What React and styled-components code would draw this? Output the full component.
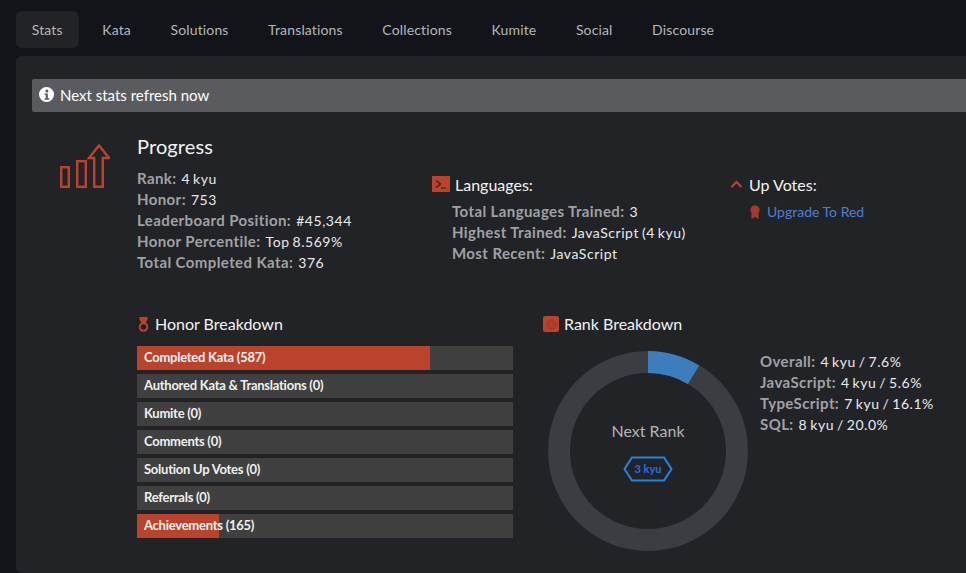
import React from 'react'
import styled, { createGlobalStyle } from 'styled-components'

const GlobalStyle = createGlobalStyle`
  html, body {
    margin: 0;
    padding: 0;
    height: 100%;
    background: #131419;
    overflow: hidden;
  }
  body {
    font-family: Lato, "Liberation Sans", sans-serif;
    color: #fff;
  }
`

const tabs = ['Stats', 'Kata', 'Solutions', 'Translations', 'Collections', 'Kumite', 'Social', 'Discourse']
const progress = [
  ['Rank', '4 kyu'],
  ['Honor', '753'],
  ['Leaderboard Position', '#45,344'],
  ['Honor Percentile', 'Top 8.569%'],
  ['Total Completed Kata', '376'],
]
const languages = [
  ['Total Languages Trained', '3'],
  ['Highest Trained', 'JavaScript (4 kyu)'],
  ['Most Recent', 'JavaScript'],
]
const honor = [
  ['Completed Kata (587)', 78],
  ['Authored Kata & Translations (0)', 0],
  ['Kumite (0)', 0],
  ['Comments (0)', 0],
  ['Solution Up Votes (0)', 0],
  ['Referrals (0)', 0],
  ['Achievements (165)', 21.8],
]
const ranks = [
  ['Overall', '4 kyu / 7.6%'],
  ['JavaScript', '4 kyu / 5.6%'],
  ['TypeScript', '7 kyu / 16.1%'],
  ['SQL', '8 kyu / 20.0%'],
]

const Stat = ({ label, value }) => (
  <StatRow>
    <StatLabel>{label}:</StatLabel>
    <StatValue>{value}</StatValue>
  </StatRow>
)

const App = () => {
  return (
    <Page>
      <GlobalStyle />
      <Tabs>
        {tabs.map((t, i) => <Tab key={t} $active={i === 0}>{t}</Tab>)}
      </Tabs>
      <Panel>
        <Alert>
          <svg width="15" height="15" viewBox="0 0 16 16">
            <circle cx="8" cy="8" r="8" fill="#fff" />
            <circle cx="8.4" cy="4.2" r="1.6" fill="#5a5b5f" />
            <path d="M6 7h3.4v5H11v1.5H6V12h1.2V8.5H6z" fill="#5a5b5f" />
          </svg>
          Next stats refresh now
        </Alert>
        <Overview>
          <ProgressIcon viewBox="0 0 52 46">
            <g fill="none" stroke="#bb432c" strokeWidth="2.4">
              <rect x="3.200" y="24.200" width="7.600" height="19.600" />
              <rect x="19.200" y="18.200" width="8.600" height="25.600" />
              <path d="M36.200 43.800V15H31L41 2.500 51 15H44.800V43.800z" />
            </g>
          </ProgressIcon>
          <ProgressColumn>
            <Heading>Progress</Heading>
            {progress.map(([l, v]) => <Stat key={l} label={l} value={v} />)}
          </ProgressColumn>
          <SideColumn>
            <SubHeading>
              <IconBox $width={18}>
                <svg width="16" height="16" viewBox="0 0 16 16" fill="none" stroke="#2a2326" strokeWidth="1.2">
                  <path d="M3 4.5 7.5 8 3 11.5M8 12h5" />
                </svg>
              </IconBox>
              Languages:
            </SubHeading>
            <Indented>
              {languages.map(([l, v]) => <Stat key={l} label={l} value={v} />)}
            </Indented>
          </SideColumn>
          <SideColumn>
            <SubHeading>
              <svg width="14" height="8" viewBox="0 0 14 8" fill="none" stroke="#bb432c" strokeWidth="2.2">
                <path d="M1.5 7 6.5 2l5 5" />
              </svg>
              <span>Up Votes:</span>
            </SubHeading>
            <Upgrade>
              <svg width="10" height="14" viewBox="0 0 10 14" fill="#a8392a">
                <circle cx="5" cy="5" r="4.6" />
                <path d="M1.5 8v6L5 12l3.5 2V8z" />
              </svg>
              <UpgradeLink href="#">Upgrade To Red</UpgradeLink>
            </Upgrade>
          </SideColumn>
        </Overview>
        <Breakdown>
          <HonorColumn>
            <BreakdownHeading>
              <MedalIcon width="13" height="15" viewBox="0 0 13 15">
                <path d="M2.500 0h8v2.500L8.500 6h-4L2.500 2.500z" fill="#bb432c" />
                <circle cx="6.500" cy="10" r="3.800" fill="none" stroke="#bb432c" strokeWidth="2" />
              </MedalIcon>
              Honor Breakdown
            </BreakdownHeading>
            <Bars>
              {honor.map(([label, pct]) => (
                <Bar key={label}>
                  <BarFill style={{ width: `${pct}%` }} />
                  <BarLabel>{label}</BarLabel>
                </Bar>
              ))}
            </Bars>
          </HonorColumn>
          <RankColumn>
            <BreakdownHeading>
              <IconBox $width={16} $round>
                <svg width="15" height="15" viewBox="0 0 16 16" fill="none" stroke="#8f3324" strokeWidth="1">
                  <circle cx="8" cy="8" r="5" />
                  <circle cx="8" cy="8" r="2.500" />
                </svg>
              </IconBox>
              Rank Breakdown
            </BreakdownHeading>
            <RankBody>
              <Donut>
                <svg width="200" height="200" viewBox="0 0 200 200">
                  <circle cx="100" cy="100" r="89" fill="none" stroke="#3c3d42" strokeWidth="22" />
                  <path d="M100 0A100 100 0 0 1 151.300 14.600L139.800 33A78 78 0 0 0 100 22z" fill="#3c7ebb" />
                </svg>
                <DonutCenter>
                  <NextRank>Next Rank</NextRank>
                  <Badge>
                    <svg width="50" height="26" viewBox="0 0 50 26">
                      <path d="M9 1.500h32L48.500 13 41 24.500H9L1.500 13z" fill="none" stroke="#1f87e0" strokeWidth="2" />
                    </svg>
                    <BadgeText>3 kyu</BadgeText>
                  </Badge>
                </DonutCenter>
              </Donut>
              <RankList>
                {ranks.map(([l, v]) => <Stat key={l} label={l} value={v} />)}
              </RankList>
            </RankBody>
          </RankColumn>
        </Breakdown>
      </Panel>
    </Page>
  )
}

const Page = styled.div`
  width: 1010px;
  height: 573px;
  padding: 11px 0 0 16px;
  box-sizing: border-box;
  overflow: hidden;
`

const Tabs = styled.nav`
  display: flex;
  height: 37px;
  margin-bottom: 8px;
`

const Tab = styled.div`
  display: flex;
  align-items: center;
  padding: 0 15.750px;
  margin-right: 8px;
  font-size: 14px;
  letter-spacing: 0.15px;
  color: #b4b7ba;
  border-radius: 6px;
  background: ${p => (p.$active ? '#222327' : 'transparent')};
`

const Panel = styled.main`
  height: 517px;
  box-sizing: border-box;
  padding: 23px 16px 0;
  background: #222327;
  border-radius: 6px;
`

const Alert = styled.div`
  display: flex;
  align-items: center;
  gap: 6px;
  height: 33px;
  padding: 0 0 2px 7px;
  box-sizing: border-box;
  font-size: 15px;
  background: #5a5b5f;
  border-radius: 2px;
`

const Overview = styled.section`
  display: grid;
  grid-template-columns: 79px 295px 298px 1fr;
  padding: 22px 0 0 26px;
`

const ProgressIcon = styled.svg`
  width: 52px;
  height: 46px;
  margin-top: 9px;
`

const ProgressColumn = styled.div``

const Heading = styled.h2`
  margin: 0 0 10px;
  height: 24px;
  font-size: 20px;
  line-height: 24px;
  font-weight: 400;
  letter-spacing: 0.1px;
  color: #f2f3f4;
`

const StatRow = styled.div`
  display: flex;
  gap: 5px;
  height: 21px;
  font-size: 14px;
  line-height: 21px;
  letter-spacing: 0.55px;
  word-spacing: -1.2px;
  white-space: nowrap;
`

const StatLabel = styled.span`
  font-size: 15px;
  font-weight: 700;
  letter-spacing: 0.4px;
  word-spacing: 0;
  color: #a0a1a4;
`

const StatValue = styled.span`
  color: #e9eaeb;
`

const SideColumn = styled.div`
  padding-top: 38px;
`

const SubHeading = styled.h3`
  display: flex;
  align-items: center;
  gap: 5px;
  margin: 0 0 5px;
  height: 24px;
  font-size: 16px;
  font-weight: 400;
  color: #f2f3f4;
`

const IconBox = styled.span`
  display: flex;
  align-items: center;
  justify-content: center;
  width: ${p => p.$width}px;
  height: 16px;
  margin-top: ${p => (p.$round ? 2 : 0)}px;
  background: #bb432c;
  border-radius: ${p => (p.$round ? 2 : 0)}px;
`

const MedalIcon = styled.svg`
  margin-top: 2px;
`

const Indented = styled.div`
  padding-left: 20px;
`

const Upgrade = styled.div`
  display: flex;
  align-items: center;
  gap: 7px;
  height: 21px;
  padding-left: 20px;
`

const UpgradeLink = styled.a`
  font-size: 14px;
  color: #4a80d4;
  text-decoration: none;
`

const Breakdown = styled.section`
  display: grid;
  grid-template-columns: 376px 1fr;
  gap: 30px;
  margin-top: 38px;
  padding-left: 105px;
`

const HonorColumn = styled.div``

const BreakdownHeading = styled.h3`
  display: flex;
  align-items: center;
  gap: 5px;
  height: 24px;
  margin: 0 0 11px;
  font-size: 16px;
  font-weight: 400;
  color: #f2f3f4;
`

const Bars = styled.div`
  display: flex;
  flex-direction: column;
  gap: 4px;
`

const Bar = styled.div`
  position: relative;
  height: 24px;
  background: #404040;
`

const BarFill = styled.div`
  height: 100%;
  background: #bb432c;
`

const BarLabel = styled.span`
  position: absolute;
  left: 7px;
  top: 0;
  font-size: 13px;
  line-height: 23px;
  font-weight: 700;
  letter-spacing: -0.25px;
  color: #f0f0f0;
`

const RankColumn = styled.div``

const RankBody = styled.div`
  display: flex;
  gap: 12px;
  padding-left: 5px;
  margin-top: 16px;
`

const Donut = styled.div`
  position: relative;
  width: 200px;
  height: 200px;
`

const DonutCenter = styled.div`
  position: absolute;
  inset: 0;
  display: flex;
  flex-direction: column;
  align-items: center;
  padding-top: 70px;
  box-sizing: border-box;
`

const NextRank = styled.div`
  font-size: 16px;
  line-height: 20px;
  color: #b3b4b6;
`

const Badge = styled.div`
  position: relative;
  width: 50px;
  height: 26px;
  margin-top: 15px;
`

const BadgeText = styled.span`
  position: absolute;
  inset: 0;
  text-align: center;
  font-size: 11px;
  line-height: 26px;
  font-weight: 700;
  color: #2a6ce0;
`

const RankList = styled.div``

export default App
